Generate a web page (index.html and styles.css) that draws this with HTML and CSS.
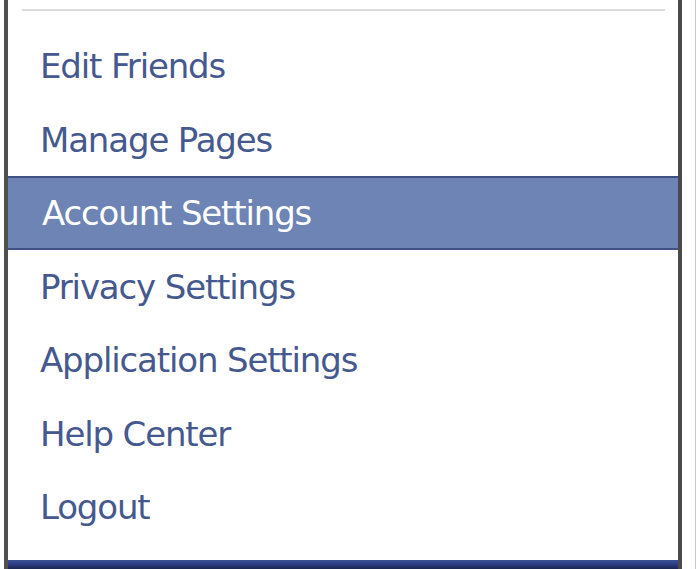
FILE: index.html
```html
<!DOCTYPE html>
<html>
<head>
<meta charset="utf-8">
<link rel="stylesheet" href="styles.css">
</head>
<body>
<div class="page">
  <div class="panel">
    <div class="sep"></div>
    <ul class="menu">
      <li class="item">Edit Friends</li>
      <li class="item">Manage Pages</li>
      <li class="item active">Account Settings</li>
      <li class="item">Privacy Settings</li>
      <li class="item">Application Settings</li>
      <li class="item">Help Center</li>
      <li class="item">Logout</li>
    </ul>
    <div class="spacer"></div>
    <div class="bottombar"></div>
  </div>
  <div class="gutter"><div class="gline"></div></div>
</div>
</body>
</html>
```

FILE: styles.css
```css
html, body {
  margin: 0;
  padding: 0;
  background: #ffffff;
  height: 569px;
  overflow: hidden;
}
.page {
  display: flex;
  height: 569px;
  padding-left: 4px;
}
.panel {
  width: 670px;
  border-left: 4px solid #505050;
  border-right: 4px solid #4a4a4a;
  display: flex;
  flex-direction: column;
  background: #fff;
}
.sep {
  height: 2px;
  background: #dcdcdc;
  margin: 9px 13px 0 14px;
}
.menu {
  list-style: none;
  margin: 18px 0 0 0;
  padding: 0;
}
.item {
  height: 73.5px;
  box-sizing: border-box;
  display: flex;
  align-items: center;
  padding-left: 32px;
  padding-top: 1px;
  font-family: "DejaVu Sans", Verdana, sans-serif;
  font-size: 34px;
  letter-spacing: -1.15px;
  color: #45598f;
}
.item.active {
  background: #6d84b4;
  color: #ffffff;
  border-top: 2px solid #3f5283;
  border-bottom: 2px solid #3f5283;
  padding-left: 34px;
}
.spacer {
  flex: 1;
}
.bottombar {
  height: 9px;
  background: linear-gradient(#3b5196 0, #2c3f85 4px, #1a2550 9px);
}
.gutter {
  flex: 1;
  display: flex;
  justify-content: flex-end;
  padding-right: 4px;
}
.gline {
  width: 1px;
  background: #c8c8c8;
}
```
